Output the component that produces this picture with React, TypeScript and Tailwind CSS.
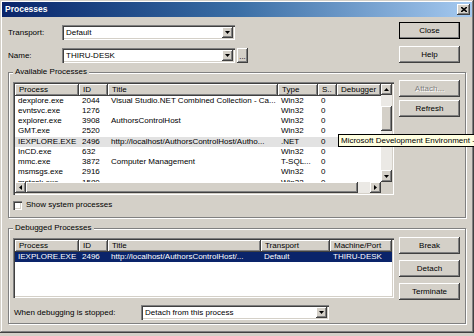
import type { ReactNode } from 'react';

const raised =
  'bg-[#d4d0c8] shadow-[inset_-1px_-1px_#404040,inset_1px_1px_#fff,inset_-2px_-2px_#808080,inset_2px_2px_#d4d0c8]';
const sunken =
  'shadow-[inset_1px_1px_#808080,inset_2px_2px_#404040,inset_-1px_-1px_#fff,inset_-2px_-2px_#d4d0c8]';

const availCols = [
  { label: 'Process', w: 'w-[64px]' },
  { label: 'ID', w: 'w-[29px]' },
  { label: 'Title', w: 'w-[170px]' },
  { label: 'Type', w: 'w-[40px]' },
  { label: 'S..', w: 'w-[19px]' },
  { label: 'Debugger', w: 'w-[44px]' },
];

const availRows = [
  ['dexplore.exe', '2044', 'Visual Studio.NET Combined Collection - Ca...', 'Win32', '0', ''],
  ['evntsvc.exe', '1276', '', 'Win32', '0', ''],
  ['explorer.exe', '3908', 'AuthorsControlHost', 'Win32', '0', ''],
  ['GMT.exe', '2520', '', 'Win32', '0', ''],
  ['IEXPLORE.EXE', '2496', 'http://localhost/AuthorsControlHost/Autho...', '.NET', '0', ''],
  ['InCD.exe', '632', '', 'Win32', '0', ''],
  ['mmc.exe', '3872', 'Computer Management', 'T-SQL...', '0', ''],
  ['msmsgs.exe', '2916', '', 'Win32', '0', ''],
  ['mstask.exe', '1580', '', 'Win32', '0', ''],
];

const debugCols = [
  { label: 'Process', w: 'w-[64px]' },
  { label: 'ID', w: 'w-[29px]' },
  { label: 'Title', w: 'w-[153px]' },
  { label: 'Transport', w: 'w-[69px]' },
  { label: 'Machine/Port', w: 'w-[62px]' },
];

const debugRow = ['IEXPLORE.EXE', '2496', 'http://localhost/AuthorsControlHost/...', 'Default', 'THIRU-DESK'];

function Arrow({ dir }: { dir: 'up' | 'down' | 'left' | 'right' }) {
  const pts = {
    up: '0,3 5,3 2.5,0',
    down: '0,0 5,0 2.5,3',
    left: '3,0 3,5 0,2.5',
    right: '0,0 0,5 3,2.5',
  }[dir];
  const vertical = dir === 'up' || dir === 'down';
  return (
    <svg width={vertical ? 5 : 3} height={vertical ? 3 : 5}>
      <polygon points={pts} fill="#000" />
    </svg>
  );
}

function Button({ children, primary, disabled, className = '' }: { children: ReactNode; primary?: boolean; disabled?: boolean; className?: string }) {
  return (
    <div
      className={`${raised} h-[17px] w-[61px] flex items-center justify-center ${primary ? 'outline outline-1 outline-black -outline-offset-1' : ''} ${
        disabled ? 'text-[#808080] [text-shadow:1px_1px_0_#fff]' : 'text-black'
      } ${className}`}
    >
      {children}
    </div>
  );
}

function Combo({ value, className = '' }: { value: string; className?: string }) {
  return (
    <div className={`${sunken} bg-white p-[2px] h-[15px] flex ${className}`}>
      <div className="flex-1 pl-[2px] leading-[11px] truncate">{value}</div>
      <div className={`${raised} w-[11px] flex items-center justify-center`}>
        <Arrow dir="down" />
      </div>
    </div>
  );
}

function Group({ label, className = '', children }: { label: string; className?: string; children: ReactNode }) {
  return (
    <div className={`relative mx-[6px] border border-[#808080] shadow-[1px_1px_0_#fff,inset_1px_1px_0_#fff] ${className}`}>
      <span className="absolute -top-[6px] left-[4px] px-[2px] bg-[#d4d0c8] leading-[10px]">{label}</span>
      {children}
    </div>
  );
}

function HeaderCell({ label, w }: { label: string; w: string }) {
  return (
    <div
      className={`${w} shrink-0 h-full pl-[4px] flex items-center bg-[#d4d0c8] shadow-[inset_-1px_-1px_#404040,inset_1px_1px_#fff,inset_-2px_-2px_#808080] truncate`}
    >
      {label}
    </div>
  );
}

export default function App() {
  return (
    <div className="relative w-[474px] h-[336px] overflow-hidden bg-[#d4d0c8] font-['Liberation_Sans',Arial,sans-serif] text-[8px] text-black">
      <div className="h-[333px] p-[2px] flex flex-col shadow-[inset_-1px_-1px_#404040,inset_1px_1px_#d4d0c8,inset_-2px_-2px_#808080,inset_2px_2px_#fff]">
        {/* title bar */}
        <div className="h-[15px] flex items-center bg-gradient-to-r from-[#0a246a] via-[#3a6ea5] to-[#a6caf0]">
          <span className="ml-[3px] text-white font-bold text-[8.5px]">Processes</span>
          <div className={`${raised} ml-auto mr-[2px] w-[13px] h-[11px] flex items-center justify-center`}>
            <svg width="6" height="5">
              <path d="M0 0 L6 5 M6 0 L0 5" stroke="#000" strokeWidth="1.6" />
            </svg>
          </div>
        </div>

        {/* transport / name */}
        <div className="flex pl-[6px] pr-[12px] pt-[5px]">
          <div className="flex flex-col gap-[8px] pt-[3px]">
            <div className="flex items-center">
              <span className="w-[54px]">Transport:</span>
              <Combo value="Default" className="w-[173px]" />
            </div>
            <div className="flex items-center">
              <span className="w-[54px]">Name:</span>
              <Combo value="THIRU-DESK" className="w-[173px]" />
              <div className={`${raised} ml-[2px] w-[11px] h-[15px] flex items-end justify-center pb-[3px] leading-[6px]`}>...</div>
            </div>
          </div>
          <div className="ml-auto flex flex-col gap-[7px]">
            <Button primary>Close</Button>
            <Button>Help</Button>
          </div>
        </div>

        {/* available processes */}
        <Group label="Available Processes" className="mt-[9px] h-[146px] pt-[7px] pl-[4px]">
          <div className="flex items-start">
            <div className={`${sunken} mt-[2px] w-[381px] h-[113px] p-[2px] bg-white flex flex-col`}>
              <div className="flex h-[98px]">
                <div className="flex-1 overflow-hidden">
                  <div className="flex h-[11.5px]">
                    {availCols.map((c) => (
                      <HeaderCell key={c.label} label={c.label} w={c.w} />
                    ))}
                  </div>
                  {availRows.map((r, i) => (
                    <div key={i} className={`flex h-[10.25px] items-center ${r[0] === 'IEXPLORE.EXE' ? 'bg-[#e2e2e2]' : ''}`}>
                      {r.map((cell, j) => (
                        <div key={j} className={`${availCols[j].w} shrink-0 pl-[3px] whitespace-nowrap overflow-hidden`}>
                          {cell}
                        </div>
                      ))}
                    </div>
                  ))}
                </div>
                {/* vertical scrollbar */}
                <div className="w-[11px] flex flex-col bg-[#ebe9e5]">
                  <div className={`${raised} h-[11px] flex items-center justify-center`}>
                    <Arrow dir="up" />
                  </div>
                  <div className="h-[11px]" />
                  <div className={`${raised} h-[25px]`} />
                  <div className="flex-1" />
                  <div className={`${raised} h-[12px] flex items-center justify-center`}>
                    <Arrow dir="down" />
                  </div>
                </div>
              </div>
              {/* horizontal scrollbar */}
              <div className="flex h-[11px]">
                <div className="flex-1 flex bg-[#ebe9e5]">
                  <div className={`${raised} w-[11px] flex items-center justify-center`}>
                    <Arrow dir="left" />
                  </div>
                  <div className={`${raised} w-[332px]`} />
                  <div className="flex-1" />
                  <div className={`${raised} w-[11px] flex items-center justify-center`}>
                    <Arrow dir="right" />
                  </div>
                </div>
                <div className="w-[11px] bg-[#d4d0c8]" />
              </div>
            </div>
            <div className="ml-[5px] flex flex-col gap-[3px]">
              <Button disabled>Attach...</Button>
              <Button>Refresh</Button>
            </div>
          </div>
          <div className="mt-[4px] flex items-center">
            <div className={`${sunken} bg-white w-[9px] h-[9px]`} />
            <span className="ml-[4px]">Show system processes</span>
          </div>
        </Group>

        {/* debugged processes */}
        <Group label="Debugged Processes" className="mt-[10px] h-[96px] pt-[8px] pl-[4px]">
          <div className="flex items-start">
            <div className={`${sunken} mt-[1px] w-[381px] h-[60px] p-[2px] bg-white overflow-hidden`}>
              <div className="flex h-[11.5px]">
                {debugCols.map((c) => (
                  <HeaderCell key={c.label} label={c.label} w={c.w} />
                ))}
              </div>
              <div className="flex h-[10.25px] items-center bg-[#0a246a] text-white">
                {debugRow.map((cell, j) => (
                  <div key={j} className={`${debugCols[j].w} shrink-0 pl-[3px] whitespace-nowrap overflow-hidden`}>
                    {cell}
                  </div>
                ))}
              </div>
            </div>
            <div className="ml-[5px] flex flex-col gap-[6px]">
              <Button>Break</Button>
              <Button>Detach</Button>
              <Button>Terminate</Button>
            </div>
          </div>
          <div className="mt-[5px] flex items-center">
            <span className="w-[128px] pl-[1px]">When debugging is stopped:</span>
            <Combo value="Detach from this process" className="w-[188px]" />
          </div>
        </Group>
      </div>

      {/* tooltip */}
      <div className="absolute left-[338px] top-[134px] h-[13px] pl-[2px] pr-[4px] border border-black bg-[#ffffe1] leading-[11px] whitespace-nowrap">
        Microsoft Development Environment - Microsoft Visual C#
      </div>
    </div>
  );
}
